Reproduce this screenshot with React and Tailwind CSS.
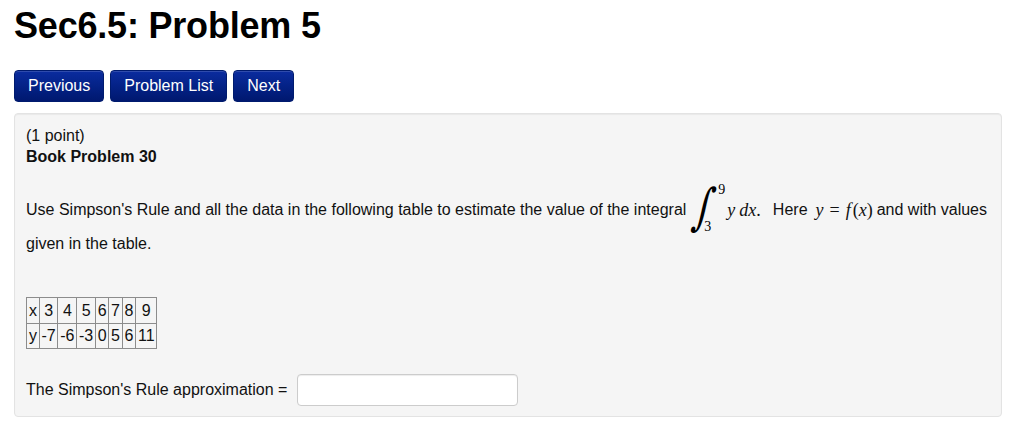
import React from 'react';

const sans = { fontFamily: '"Liberation Sans", Helvetica, Arial, sans-serif' };

function NavButton({ children }) {
  return (
    <button className="h-[32px] px-[13px] rounded-[4px] border border-[#001b6e] bg-linear-to-b from-[#0b2c9f] to-[#00186f] text-white text-[16px] leading-[30px] shadow-[inset_0_1px_0_rgba(255,255,255,0.15)]">
      {children}
    </button>
  );
}

function Integral() {
  // MathJax-ish layout: big integral sign with limits 3 and 9
  return (
    <span className="relative inline-block shrink-0 w-[37px] h-[52px] ml-[4px] font-['Liberation_Serif',serif] text-black">
      <span className="absolute left-[1px] top-[-7px] text-[50px] leading-[64px] font-['DejaVu_Serif',serif] font-normal -skew-x-[16deg] scale-x-[0.72] origin-center">∫</span>
      <span className="absolute left-[28px] top-[1px] text-[14px] leading-[14px]">9</span>
      <span className="absolute left-[14px] top-[38px] text-[14px] leading-[14px]">3</span>
    </span>
  );
}

const xs = ['x', '3', '4', '5', '6', '7', '8', '9'];
const ys = ['y', '-7', '-6', '-3', '0', '5', '6', '11'];

export default function App() {
  return (
    <div className="w-[1024px] h-[429px] bg-white text-[#111] overflow-hidden" style={sans}>
      <h1 className="ml-[14px] pt-[6px] text-[36px] leading-[40px] font-bold text-black tracking-[-0.2px]">
        Sec6.5: Problem 5
      </h1>

      <div className="flex gap-[6px] ml-[14px] mt-[24px]">
        <NavButton>Previous</NavButton>
        <NavButton>Problem List</NavButton>
        <NavButton>Next</NavButton>
      </div>

      <div className="ml-[14px] mt-[11px] w-[988px] h-[304px] border border-[#e3e3e3] rounded-[4px] bg-[#f5f5f5] shadow-[inset_0_1px_1px_rgba(0,0,0,0.05)] px-[11px] pt-[12px] text-[16px]">
        <div className="leading-[20px]">(1 point)</div>
        <div className="leading-[20px] mt-[1px] font-bold">Book Problem 30</div>

        <div className="flex items-start h-[52px] mt-[15px] whitespace-nowrap">
          <span className="leading-[20px] mt-[18px]">
            Use Simpson's Rule and all the data in the following table to estimate the value of the integral
          </span>
          <Integral />
          <span className="mt-[18px] leading-[20px] font-['Liberation_Serif',serif] italic text-[18px]">
            y<span className="ml-[4px]">dx</span>
          </span>
          <span className="mt-[18px] leading-[20px] font-['Liberation_Serif',serif] text-[18px]">.</span>
          <span className="mt-[18px] leading-[20px] ml-[12px]">Here</span>
          <span className="mt-[18px] leading-[20px] ml-[8px] font-['Liberation_Serif',serif] text-[18px]">
            <i>y</i>
            <span className="mx-[6px]">=</span>
            <i className="mr-[2px]">f</i>(<i>x</i>)
          </span>
          <span className="mt-[18px] leading-[20px] ml-[4px]">and with values</span>
        </div>
        <div className="leading-[20px]">given in the table.</div>

        <table className="mt-[43px] border-collapse border border-[#555] text-[16px] leading-[22px] text-center">
          <tbody>
            <tr>
              {xs.map((v, i) => (
                <td key={i} className="border border-[#8c8c8c] pl-[2px] pr-[1.5px] h-[26px]">{v}</td>
              ))}
            </tr>
            <tr>
              {ys.map((v, i) => (
                <td key={i} className="border border-[#8c8c8c] pl-[2px] pr-[1.5px] h-[25px]">{v}</td>
              ))}
            </tr>
          </tbody>
        </table>

        <div className="flex items-center mt-[25px]">
          <span className="leading-[20px]">The Simpson's Rule approximation =</span>
          <input
            type="text"
            className="ml-[10px] w-[221px] h-[32px] bg-white border border-[#ccc] rounded-[4px] shadow-[inset_0_1px_1px_rgba(0,0,0,0.075)] outline-none"
          />
        </div>
      </div>
    </div>
  );
}
